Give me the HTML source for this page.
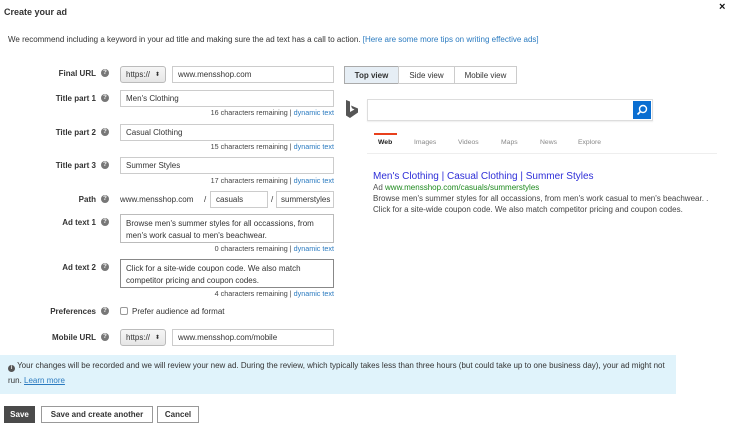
<!DOCTYPE html>
<html><head><meta charset="utf-8"><style>
*{box-sizing:border-box;margin:0;padding:0}
body{width:730px;height:425px;background:#fff;font-family:"Liberation Sans",Arial,sans-serif;color:#333;position:relative;overflow:hidden;font-size:8px}
.a{position:absolute;white-space:nowrap}
.lbl{position:absolute;right:634px;font-weight:bold;font-size:8px;color:#333;white-space:nowrap}
.q{position:absolute;left:101px;width:8px;height:8px;border-radius:50%;background:#777;color:#fff;font-size:6px;font-weight:bold;text-align:center;line-height:8px}
.in{position:absolute;border:1px solid #ccc;background:#fff;font-size:8px;padding:0 5px;color:#333;display:flex;align-items:center}
.sel{position:absolute;border:1px solid #bbb;border-radius:3px;background:linear-gradient(#f6f6f6,#e6e6e6);font-size:8px;padding-left:5px;display:flex;align-items:center}
.rem{position:absolute;right:396px;font-size:7.2px;color:#444;white-space:nowrap}
.rem span{color:#2b7bc0}
.ta{position:absolute;left:120px;width:214px;height:29px;border:1px solid #bbb;padding:3px 5px;font-size:8px;line-height:12px;color:#333}
.btn{position:absolute;top:406px;height:17px;border:1px solid #999;font-size:8px;font-weight:bold;display:flex;align-items:center;justify-content:center;background:#fff}
.tab{position:absolute;top:66px;height:18px;border:1px solid #ccc;font-size:8px;display:flex;align-items:center;justify-content:center;background:#fff}
.nav{position:absolute;top:139px;font-size:6.8px;color:#888}
</style></head><body>
<div class="a" style="left:4px;top:7px;font-size:9px;font-weight:bold">Create your ad</div>
<div class="a" style="left:719px;top:1px;font-size:11px;font-weight:bold;color:#111">×</div>
<div class="a" style="left:8px;top:35px;font-size:8px;color:#333">We recommend including a keyword in your ad title and making sure the ad text has a call to action. <span style="color:#2b7bc0">[Here are some more tips on writing effective ads]</span></div>

<div class="lbl" style="top:69px">Final URL</div><div class="q" style="top:69px">?</div>
<div class="sel" style="left:120px;top:66px;width:46px;height:17px">https:// <span style="margin-left:5px;font-size:6px">⬍</span></div>
<div class="in" style="left:172px;top:66px;width:162px;height:17px">www.mensshop.com</div>

<div class="lbl" style="top:94px">Title part 1</div><div class="q" style="top:94px">?</div>
<div class="in" style="left:120px;top:90px;width:214px;height:17px">Men's Clothing</div>
<div class="rem" style="top:108px">16 characters remaining | <span>dynamic text</span></div>

<div class="lbl" style="top:128px">Title part 2</div><div class="q" style="top:128px">?</div>
<div class="in" style="left:120px;top:124px;width:214px;height:17px">Casual Clothing</div>
<div class="rem" style="top:142px">15 characters remaining | <span>dynamic text</span></div>

<div class="lbl" style="top:161px">Title part 3</div><div class="q" style="top:161px">?</div>
<div class="in" style="left:120px;top:157px;width:214px;height:17px">Summer Styles</div>
<div class="rem" style="top:176px">17 characters remaining | <span>dynamic text</span></div>

<div class="lbl" style="top:195px">Path</div><div class="q" style="top:195px">?</div>
<div class="a" style="left:120px;top:195px">www.mensshop.com</div>
<div class="a" style="left:204px;top:195px">/</div>
<div class="in" style="left:210px;top:191px;width:58px;height:17px">casuals</div>
<div class="a" style="left:271px;top:195px">/</div>
<div class="in" style="left:276px;top:191px;width:58px;height:17px;padding:0 4px">summerstyles</div>

<div class="lbl" style="top:218px">Ad text 1</div><div class="q" style="top:218px">?</div>
<div class="ta" style="top:214px">Browse men's summer styles for all occassions, from men's work casual to men's beachwear.</div>
<div class="rem" style="top:244px">0 characters remaining | <span>dynamic text</span></div>

<div class="lbl" style="top:263px">Ad text 2</div><div class="q" style="top:263px">?</div>
<div class="ta" style="top:259px;border-color:#888">Click for a site-wide coupon code. We also match competitor pricing and coupon codes.</div>
<div class="rem" style="top:289px">4 characters remaining | <span>dynamic text</span></div>

<div class="lbl" style="top:307px">Preferences</div><div class="q" style="top:307px">?</div>
<div class="a" style="left:120px;top:307px;width:8px;height:8px;border:1px solid #999;border-radius:2px"></div>
<div class="a" style="left:132px;top:307px">Prefer audience ad format</div>

<div class="lbl" style="top:333px">Mobile URL</div><div class="q" style="top:333px">?</div>
<div class="sel" style="left:120px;top:329px;width:46px;height:17px">https:// <span style="margin-left:5px;font-size:6px">⬍</span></div>
<div class="in" style="left:172px;top:329px;width:162px;height:17px">www.mensshop.com/mobile</div>

<div class="a" style="left:0;top:355px;width:676px;height:39px;background:#e0f3fb"></div>
<div class="a" style="left:8px;top:361px;font-size:8px;color:#333"><span style="display:inline-block;width:7px;height:7px;border-radius:50%;background:#555;color:#fff;font-size:5px;text-align:center;line-height:7px;font-weight:bold;vertical-align:-1px">i</span> Your changes will be recorded and we will review your new ad. During the review, which typically takes less than three hours (but could take up to one business day), your ad might not</div>
<div class="a" style="left:8px;top:376px;font-size:8px">run. <span style="color:#2b7bc0;text-decoration:underline">Learn more</span></div>

<div class="btn" style="left:4px;width:31px;background:#4a4a4a;color:#fff;border-color:#4a4a4a">Save</div>
<div class="btn" style="left:41px;width:112px">Save and create another</div>
<div class="btn" style="left:157px;width:42px">Cancel</div>

<div class="tab" style="left:344px;width:55px;background:#e6eef5;border-color:#aaa;font-weight:bold">Top view</div>
<div class="tab" style="left:398px;width:57px">Side view</div>
<div class="tab" style="left:454px;width:63px">Mobile view</div>

<svg class="a" style="left:345px;top:100px" width="14" height="19" viewBox="0 0 14 19"><path d="M1 0 L5 1.5 V12 L9.5 9.5 L7 8.3 L6 5.5 L13 8.5 V12.5 L5 18 L1 15.5 Z" fill="#555"/></svg>
<div class="a" style="left:367px;top:99px;width:286px;height:22px;border:1px solid #ddd;box-shadow:0 1px 1px #eee"></div>
<div class="a" style="left:633px;top:101px;width:18px;height:18px;background:#0a6ed1"></div>
<svg class="a" style="left:636px;top:104px" width="12" height="12" viewBox="0 0 12 12"><circle cx="7" cy="5" r="3.5" stroke="#fff" stroke-width="1.4" fill="none"/><path d="M4.5 7.5 L1.5 10.5" stroke="#fff" stroke-width="1.6"/></svg>
<div class="a" style="left:374px;top:133px;width:23px;height:2px;background:#e8401c"></div>
<div class="nav" style="left:378px;color:#222;font-weight:bold">Web</div>
<div class="nav" style="left:414px">Images</div>
<div class="nav" style="left:458px">Videos</div>
<div class="nav" style="left:501px">Maps</div>
<div class="nav" style="left:540px">News</div>
<div class="nav" style="left:578px">Explore</div>
<div class="a" style="left:367px;top:153px;width:350px;height:1px;background:#eee"></div>
<div class="a" style="left:373px;top:171px;font-size:10px;color:#2e2ed8">Men's Clothing | Casual Clothing | Summer Styles</div>
<div class="a" style="left:373px;top:183px;font-size:8px;color:#555">Ad <span style="color:#1e8a1e">www.mensshop.com/casuals/summerstyles</span></div>
<div class="a" style="left:373px;top:194px;font-size:8px;color:#444">Browse men's summer styles for all occassions, from men's work casual to men's beachwear. .</div>
<div class="a" style="left:373px;top:205px;font-size:8px;color:#444">Click for a site-wide coupon code. We also match competitor pricing and coupon codes.</div>
</body></html>
